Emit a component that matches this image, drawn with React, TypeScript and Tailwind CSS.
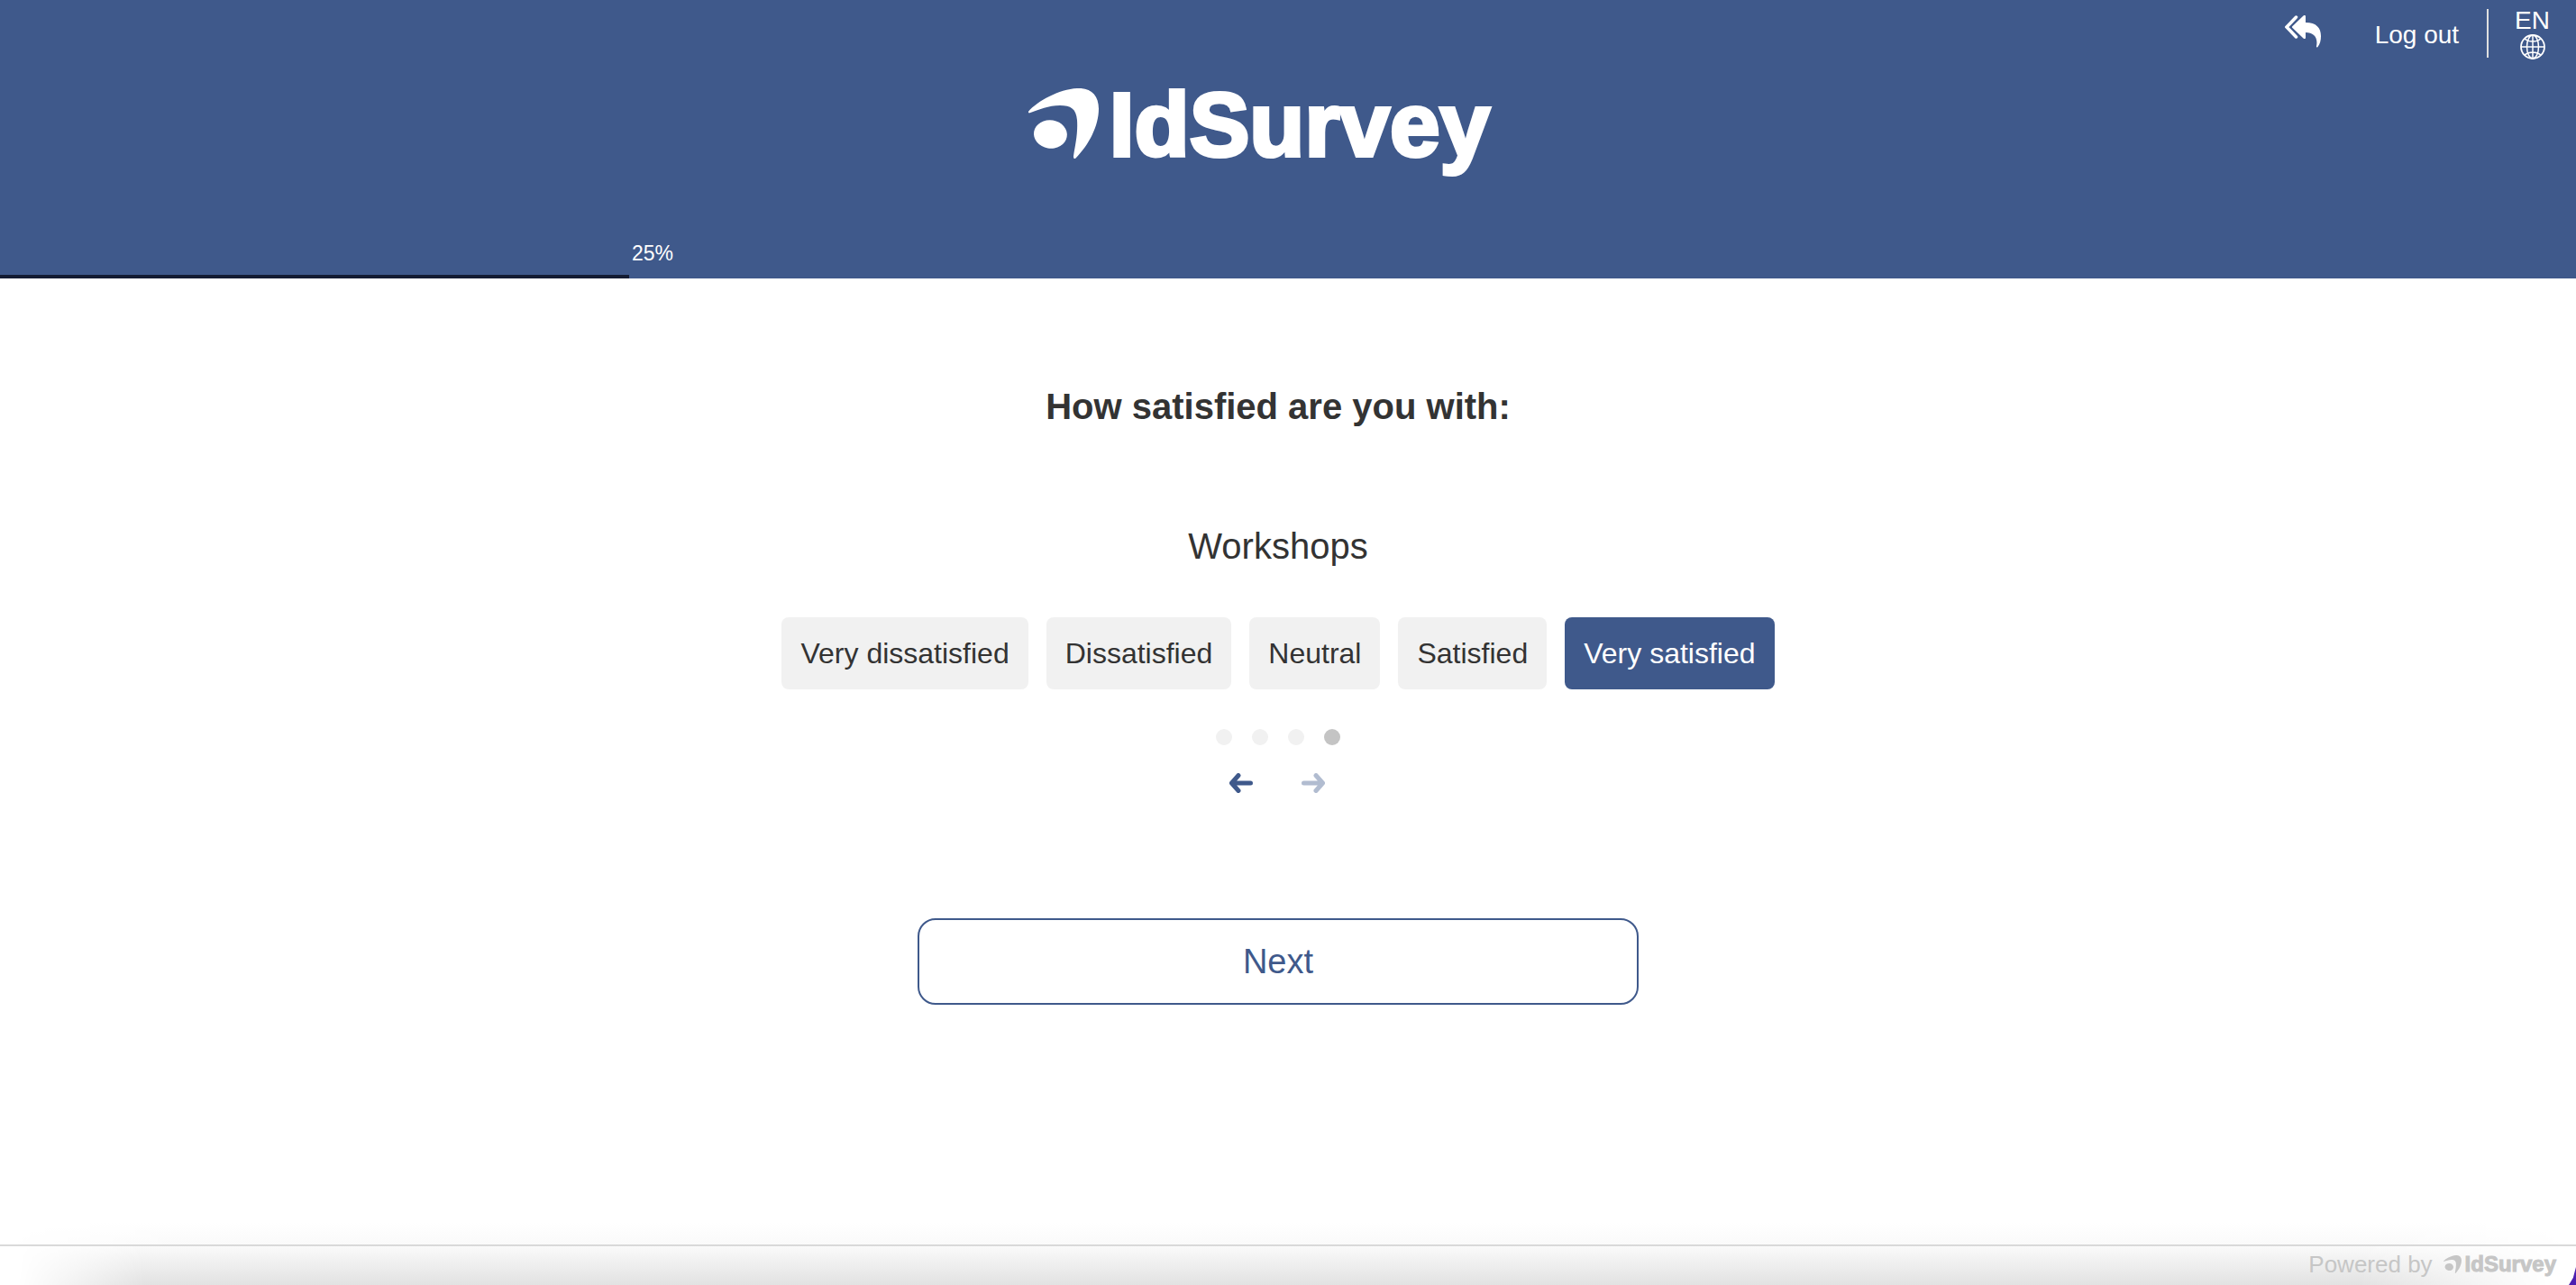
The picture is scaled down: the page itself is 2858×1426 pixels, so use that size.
import { useState } from 'react';

const OPTIONS = ['Very dissatisfied', 'Dissatisfied', 'Neutral', 'Satisfied', 'Very satisfied'];
const STEPS = ['Step 1', 'Step 2', 'Step 3', 'Step 4'];
const PROGRESS = 25;

function LogoMark({ className }: { className: string }) {
  return (
    <svg viewBox="0 0 78 82" className={className} fill="currentColor" preserveAspectRatio="none" aria-hidden="true">
      <path d="M0 27C10 15 34 1 54 0c15-1 24 8 24 24 0 20-11 42-25 57-2 2-3 1-3-2 2-13 5-26 4-42-1-13-7-17-19-17C22 20 12 25 3 28c-2 1-4 1-3-1Z" />
      <ellipse cx="24.500" cy="53.500" rx="18.500" ry="16.500" transform="rotate(10 24 53)" />
    </svg>
  );
}

function ReplyAllIcon() {
  return (
    <svg viewBox="0 0 40 36" className="h-9 w-10" aria-hidden="true">
      <path d="M12.500 2 2 13l10.500 11" fill="none" stroke="white" strokeWidth="3.500" strokeLinecap="round" />
      <path
        d="M20.500.5c1.500-1.200 2.500-.5 2.500 1V8c12 0 17 6 17 15 0 5-1 9-3.500 12-.8 1-1.800.5-1.500-.7 2-9.800-3-15.300-12-15.300v5.500c0 1.500-1 2.200-2.500 1L8.500 14c-.8-.7-.8-1.300 0-2Z"
        fill="white"
      />
    </svg>
  );
}

function GlobeIcon() {
  return (
    <svg viewBox="0 0 28 28" className="size-7" fill="none" stroke="white" strokeWidth="1.500" aria-hidden="true">
      <circle cx="14" cy="14" r="13" strokeWidth="1.800" />
      <ellipse cx="14" cy="14" rx="6.500" ry="13" />
      <path d="M14 1v26M1 14h26M5 5c5 4 13 4 18 0M5 23c5-4 13-4 18 0" />
    </svg>
  );
}

function ArrowIcon({ className }: { className?: string }) {
  return (
    <svg
      viewBox="0 0 26 22"
      className={`h-[22px] w-[26px] ${className ?? ''}`}
      fill="none"
      stroke="currentColor"
      strokeWidth="5"
      strokeLinecap="round"
      strokeLinejoin="round"
      aria-hidden="true"
    >
      <path d="M10 2.500 2.500 11l7.500 8.500M3 11h20.500" />
    </svg>
  );
}

export default function App() {
  const [selected, setSelected] = useState('Very satisfied');
  const [step, setStep] = useState(3);

  return (
    <div className="flex min-h-screen flex-col bg-white font-['Liberation_Sans',Arial,sans-serif] text-[#333]">
      <header className="flex h-[309px] flex-col bg-[#3f598b] text-white">
        <div className="flex h-[72px] items-start justify-end pr-[29px]">
          <button type="button" aria-label="Back" className="mt-[17px] mr-[60px]">
            <ReplyAllIcon />
          </button>
          <a href="#logout" className="mt-[23px] mr-[31px] text-[28px] leading-8">
            Log out
          </a>
          <span className="mt-2.5 mr-[29px] h-[54px] w-0.5 bg-[#e0e0e0]" />
          <button type="button" aria-label="Language: EN" className="mt-2 flex flex-col items-center text-[28px] leading-[30px]">
            <span>EN</span>
            <GlobeIcon />
          </button>
        </div>

        <div className="flex items-start justify-center pt-[26px] pr-16">
          <LogoMark className="h-[78px] w-[78px]" />
          <span className="ml-3 text-[100px] leading-[80px] font-bold [-webkit-text-stroke:4px_white]">IdSurvey</span>
        </div>

        <div className="mt-auto">
          <div className="flex pb-[10px] text-[23px] leading-7">
            <div className="w-[701px]" />
            <span>{PROGRESS}%</span>
          </div>
          <div className="h-1 w-[698px] bg-[#141c33]" role="progressbar" aria-label="Progress" aria-valuenow={PROGRESS} />
        </div>
      </header>

      <main className="flex flex-1 flex-col items-center pr-[22px]">
        <h1 className="mt-[118px] text-[40px] leading-12 font-bold">How satisfied are you with:</h1>
        <h2 className="mt-[107px] text-[40px] leading-12">Workshops</h2>

        <div className="mt-[55px] flex gap-5">
          {OPTIONS.map(option => (
            <button
              key={option}
              type="button"
              aria-pressed={selected === option}
              onClick={() => setSelected(option)}
              className={`h-20 rounded-lg px-[21px] text-[32px] leading-10 ${
                selected === option ? 'bg-[#3f598b] text-white' : 'bg-[#f1f1f1]'
              }`}
            >
              {option}
            </button>
          ))}
        </div>

        {/* Carousel position */}
        <div className="mt-11 flex gap-[22px]">
          {STEPS.map((label, i) => (
            <button
              key={label}
              type="button"
              aria-label={label}
              onClick={() => setStep(i)}
              className={`size-[18px] rounded-full ${i === step ? 'bg-[#c4c4c4]' : 'bg-[#f1f1f1]'}`}
            />
          ))}
        </div>
        <div className="mt-[31px] flex gap-[54px] pr-0.5 text-[#3f598b]">
          <button type="button" aria-label="Previous" disabled={step === 0} className="disabled:opacity-40" onClick={() => setStep(step - 1)}>
            <ArrowIcon />
          </button>
          <button type="button" aria-label="Following" disabled={step === 3} className="disabled:opacity-40" onClick={() => setStep(step + 1)}>
            <ArrowIcon className="rotate-180" />
          </button>
        </div>

        <button type="button" className="mt-[139px] h-24 w-[800px] rounded-[20px] border-2 border-[#3f598b] text-[38px] text-[#3f598b]">
          Next
        </button>
      </main>

      {/* Soft shade rising from the bottom edge, fading out at both sides */}
      <div className="h-6 bg-linear-to-b from-white to-[#fafafa] [mask-image:linear-gradient(to_right,transparent,black_200px,black_calc(100%-200px),transparent)]" />
      <footer className="relative flex h-[45px] items-center justify-end overflow-hidden border-t-2 border-[#d9d9d9] pr-[22px] pb-1 text-[#c6c6c6]">
        <div className="absolute inset-0 bg-linear-to-b from-[#fafafa] to-[#e2e2e2] [mask-image:linear-gradient(to_right,transparent_20px,black_160px,black_calc(100%-240px),transparent_calc(100%-30px))]" />
        <div className="absolute right-0 bottom-0 h-5 w-2 bg-[#4b1fb0] [clip-path:polygon(100%_0,100%_100%,0_100%,60%_60%)]" />
        <span className="relative text-[26px] leading-8">Powered by</span>
        <LogoMark className="relative ml-3 h-5 w-5" />
        <span className="relative ml-1 text-[24px] leading-8 font-bold [-webkit-text-stroke:1px_#c6c6c6]">IdSurvey</span>
      </footer>
    </div>
  );
}
